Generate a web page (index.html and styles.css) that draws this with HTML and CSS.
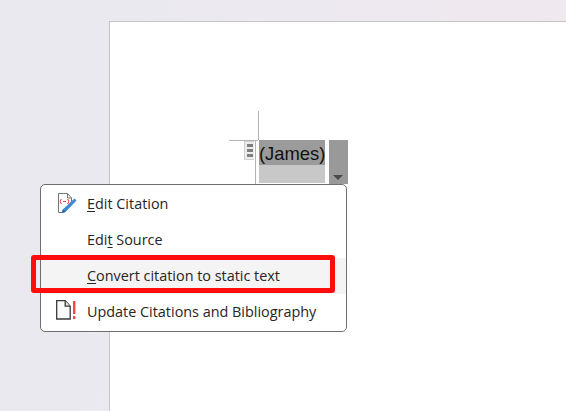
FILE: index.html
```html
<!DOCTYPE html>
<html lang="en">
<head>
    <meta charset="UTF-8">
    <title>Convert citation to static text</title>
    <link rel="stylesheet" href="styles.css">
</head>
<body>
    <div class="page">
        <div class="crop-v"></div>
        <div class="crop-h"></div>
        <div class="citation">
            <div class="handle"><span></span><span></span><span></span></div>
            <div class="field"><div class="field-text">(James)</div></div>
            <div class="drop"><div class="arrow"></div></div>
        </div>
    </div>

    <div class="menu">
        <div class="menu-item">
            <svg class="icon" width="24" height="24" viewBox="0 0 24 24">
                <path d="M6 20.500H2.500v-19h9l4 4.500v5" fill="#fff" stroke="#757575"/>
                <path d="M11.500 1.500V6h4" fill="none" stroke="#757575"/>
                <path d="M5.500 7c-1.500 1-1.500 4 0 5M11.500 7c1.500 1 1.500 4 0 5M7 9.500h3" fill="none" stroke="#d9453a"/>
                <path d="M6 21l.8-3.500L18.500 6.500l2 2L9.500 20z" fill="#3f87cf"/>
                <path d="M6 21l.8-3.500 2.700 2.500z" fill="#1f5f9f"/>
            </svg>
            <span class="label"><u>E</u>dit Citation</span>
        </div>
        <div class="menu-item">
            <span class="icon"></span>
            <span class="label">Edi<u>t</u> Source</span>
        </div>
        <div class="menu-item hover">
            <span class="icon"></span>
            <span class="label"><u>C</u>onvert citation to static text</span>
        </div>
        <div class="menu-item">
            <svg class="icon" width="24" height="24" viewBox="0 0 24 24">
                <path d="M.7.700h8.500l5 5.500v12.800H.7z" fill="#fafafa" stroke="#3a3a3a" stroke-width="1.300"/>
                <path d="M9.200.700v5.500h5" fill="#e4e4e4" stroke="#3a3a3a" stroke-width="1.300"/>
                <rect x="17" y="1" width="2.400" height="13" fill="#f0474c"/>
                <rect x="17" y="16" width="2.400" height="3" fill="#f0474c"/>
            </svg>
            <span class="label">Update Citations and Bibliography</span>
        </div>
    </div>

    <div class="highlight"></div>
</body>
</html>
```

FILE: styles.css
```css
body {
    margin: 0;
    padding: 21px 0 0 109px;
    box-sizing: border-box;
    width: 566px;
    height: 411px;
    overflow: hidden;
    position: relative;
    font-family: "Open Sans", "Noto Sans", sans-serif;
    background: linear-gradient(100deg, #eae9f0 0%, #ece9f0 40%, #f0e8ee 100%);
}

.page {
    position: relative;
    height: 100%;
    box-sizing: border-box;
    background: #fff;
    border-left: 1px solid #c6c6c6;
    border-top: 1px solid #c6c6c6;
}

.crop-v {
    position: absolute;
    left: 148px;
    top: 89px;
    width: 1px;
    height: 29px;
    background: #b4b4b4;
}

.crop-h {
    position: absolute;
    left: 119px;
    top: 118px;
    width: 29px;
    height: 1px;
    background: #b4b4b4;
}

.citation {
    position: absolute;
    left: 134px;
    top: 118px;
    display: flex;
}

.handle {
    width: 10px;
    height: 19px;
    margin-top: 1px;
    background: #ececec;
    border: 1px solid #cfcfcf;
    border-right: 0;
    display: flex;
    flex-direction: column;
    align-items: center;
    justify-content: space-evenly;
    box-sizing: border-box;
}

.handle span {
    width: 6px;
    height: 3px;
    background: #7e7e7e;
}

.field {
    margin-left: 1px;
    border-left: 1px solid #b4b4b4;
    padding: 0 4px 0 3px;
    height: 44px;
}

.field-text {
    width: 66px;
    height: 43px;
    background: linear-gradient(#9b9b9b 0, #9b9b9b 25px, #c8c8c8 25px);
    font-family: "Liberation Sans", Arial, sans-serif;
    font-size: 18.400px;
    line-height: 28px;
    color: #111;
    white-space: nowrap;
}

.drop {
    width: 19px;
    height: 44px;
    background: #999;
    display: flex;
    justify-content: center;
    align-items: flex-end;
    padding: 0 1px 4px 0;
    box-sizing: border-box;
}

.arrow {
    width: 0;
    height: 0;
    border-left: 5px solid transparent;
    border-right: 5px solid transparent;
    border-top: 5px solid #4a4a4a;
}

.menu {
    position: absolute;
    left: 40px;
    top: 184px;
    width: 307px;
    height: 148px;
    box-sizing: border-box;
    background: #fff;
    border: 1px solid #6e6e6e;
    border-radius: 5px;
    padding: 1px 0;
}

.menu-item {
    height: 36px;
    display: flex;
    align-items: center;
    gap: 7px;
    padding-left: 15px;
    font-size: 14.400px;
    color: #262626;
    white-space: nowrap;
}

.menu-item u {
    text-underline-offset: 2px;
}

.label {
    margin-bottom: 2px;
}

.icon {
    width: 24px;
    height: 24px;
    flex: none;
    display: block;
}

.hover {
    background: #f4f4f4;
}

.highlight {
    position: absolute;
    left: 31px;
    top: 255px;
    width: 304px;
    height: 38px;
    box-sizing: border-box;
    border: 5px solid #fe0d0d;
    border-radius: 3px;
}
```
